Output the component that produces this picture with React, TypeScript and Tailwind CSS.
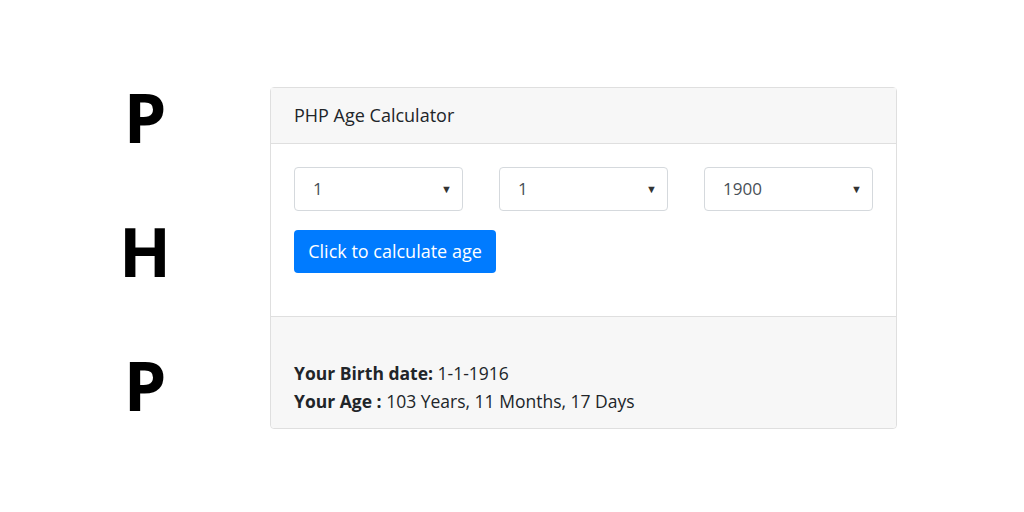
import React from 'react'

const font = { fontFamily: '"Open Sans", "Noto Sans", Arial, sans-serif' }

function FakeSelect({ value }: { value: string }) {
    return (
        <div className="flex h-[44px] w-[169px] items-center justify-between rounded-[4px] border border-[#d5d9dd] bg-white pl-[18px] pr-[10px] text-[17px] text-[#495057]">
            <span>{value}</span>
            <span className="text-[11px] text-[#333]">▼</span>
        </div>
    )
}

export default function App() {
    return (
        <div className="flex h-[512px] w-[1024px] bg-white" style={font}>
            {/* big letters */}
            <div className="flex w-[270px] flex-col pl-[20px] pt-[50px]">
                {['P', 'H', 'P'].map((l, i) => (
                    <div key={i} className="flex h-[134px] w-[250px] items-center justify-center text-[68px] font-bold text-black">
                        {l}
                    </div>
                ))}
            </div>

            {/* card */}
            <div className="mt-[87px] flex h-[342px] w-[627px] flex-col rounded-[4px] border border-[#dfdfdf] text-[#212529]">
                <div className="flex h-[56px] items-center border-b border-[#dfdfdf] bg-[#f7f7f7] px-[23px] text-[18px]">
                    PHP Age Calculator
                </div>

                <div className="flex h-[172px] flex-col gap-[19px] px-[23px] pt-[23px]">
                    <div className="flex justify-between">
                        <FakeSelect value="1" />
                        <FakeSelect value="1" />
                        <FakeSelect value="1900" />
                    </div>
                    <button className="flex h-[43px] w-[202px] items-center justify-center rounded-[4px] bg-[#007bff] text-[18px] text-white">
                        Click to calculate age
                    </button>
                </div>

                <div className="flex flex-1 flex-col justify-end gap-[4px] rounded-b-[4px] border-t border-[#dfdfdf] bg-[#f7f7f7] px-[23px] pb-[15px] text-[17.5px] leading-[24px]">
                    <div>
                        <b>Your Birth date:</b> 1-1-1916
                    </div>
                    <div>
                        <b>Your Age :</b> 103 Years, 11 Months, 17 Days
                    </div>
                </div>
            </div>
        </div>
    )
}
